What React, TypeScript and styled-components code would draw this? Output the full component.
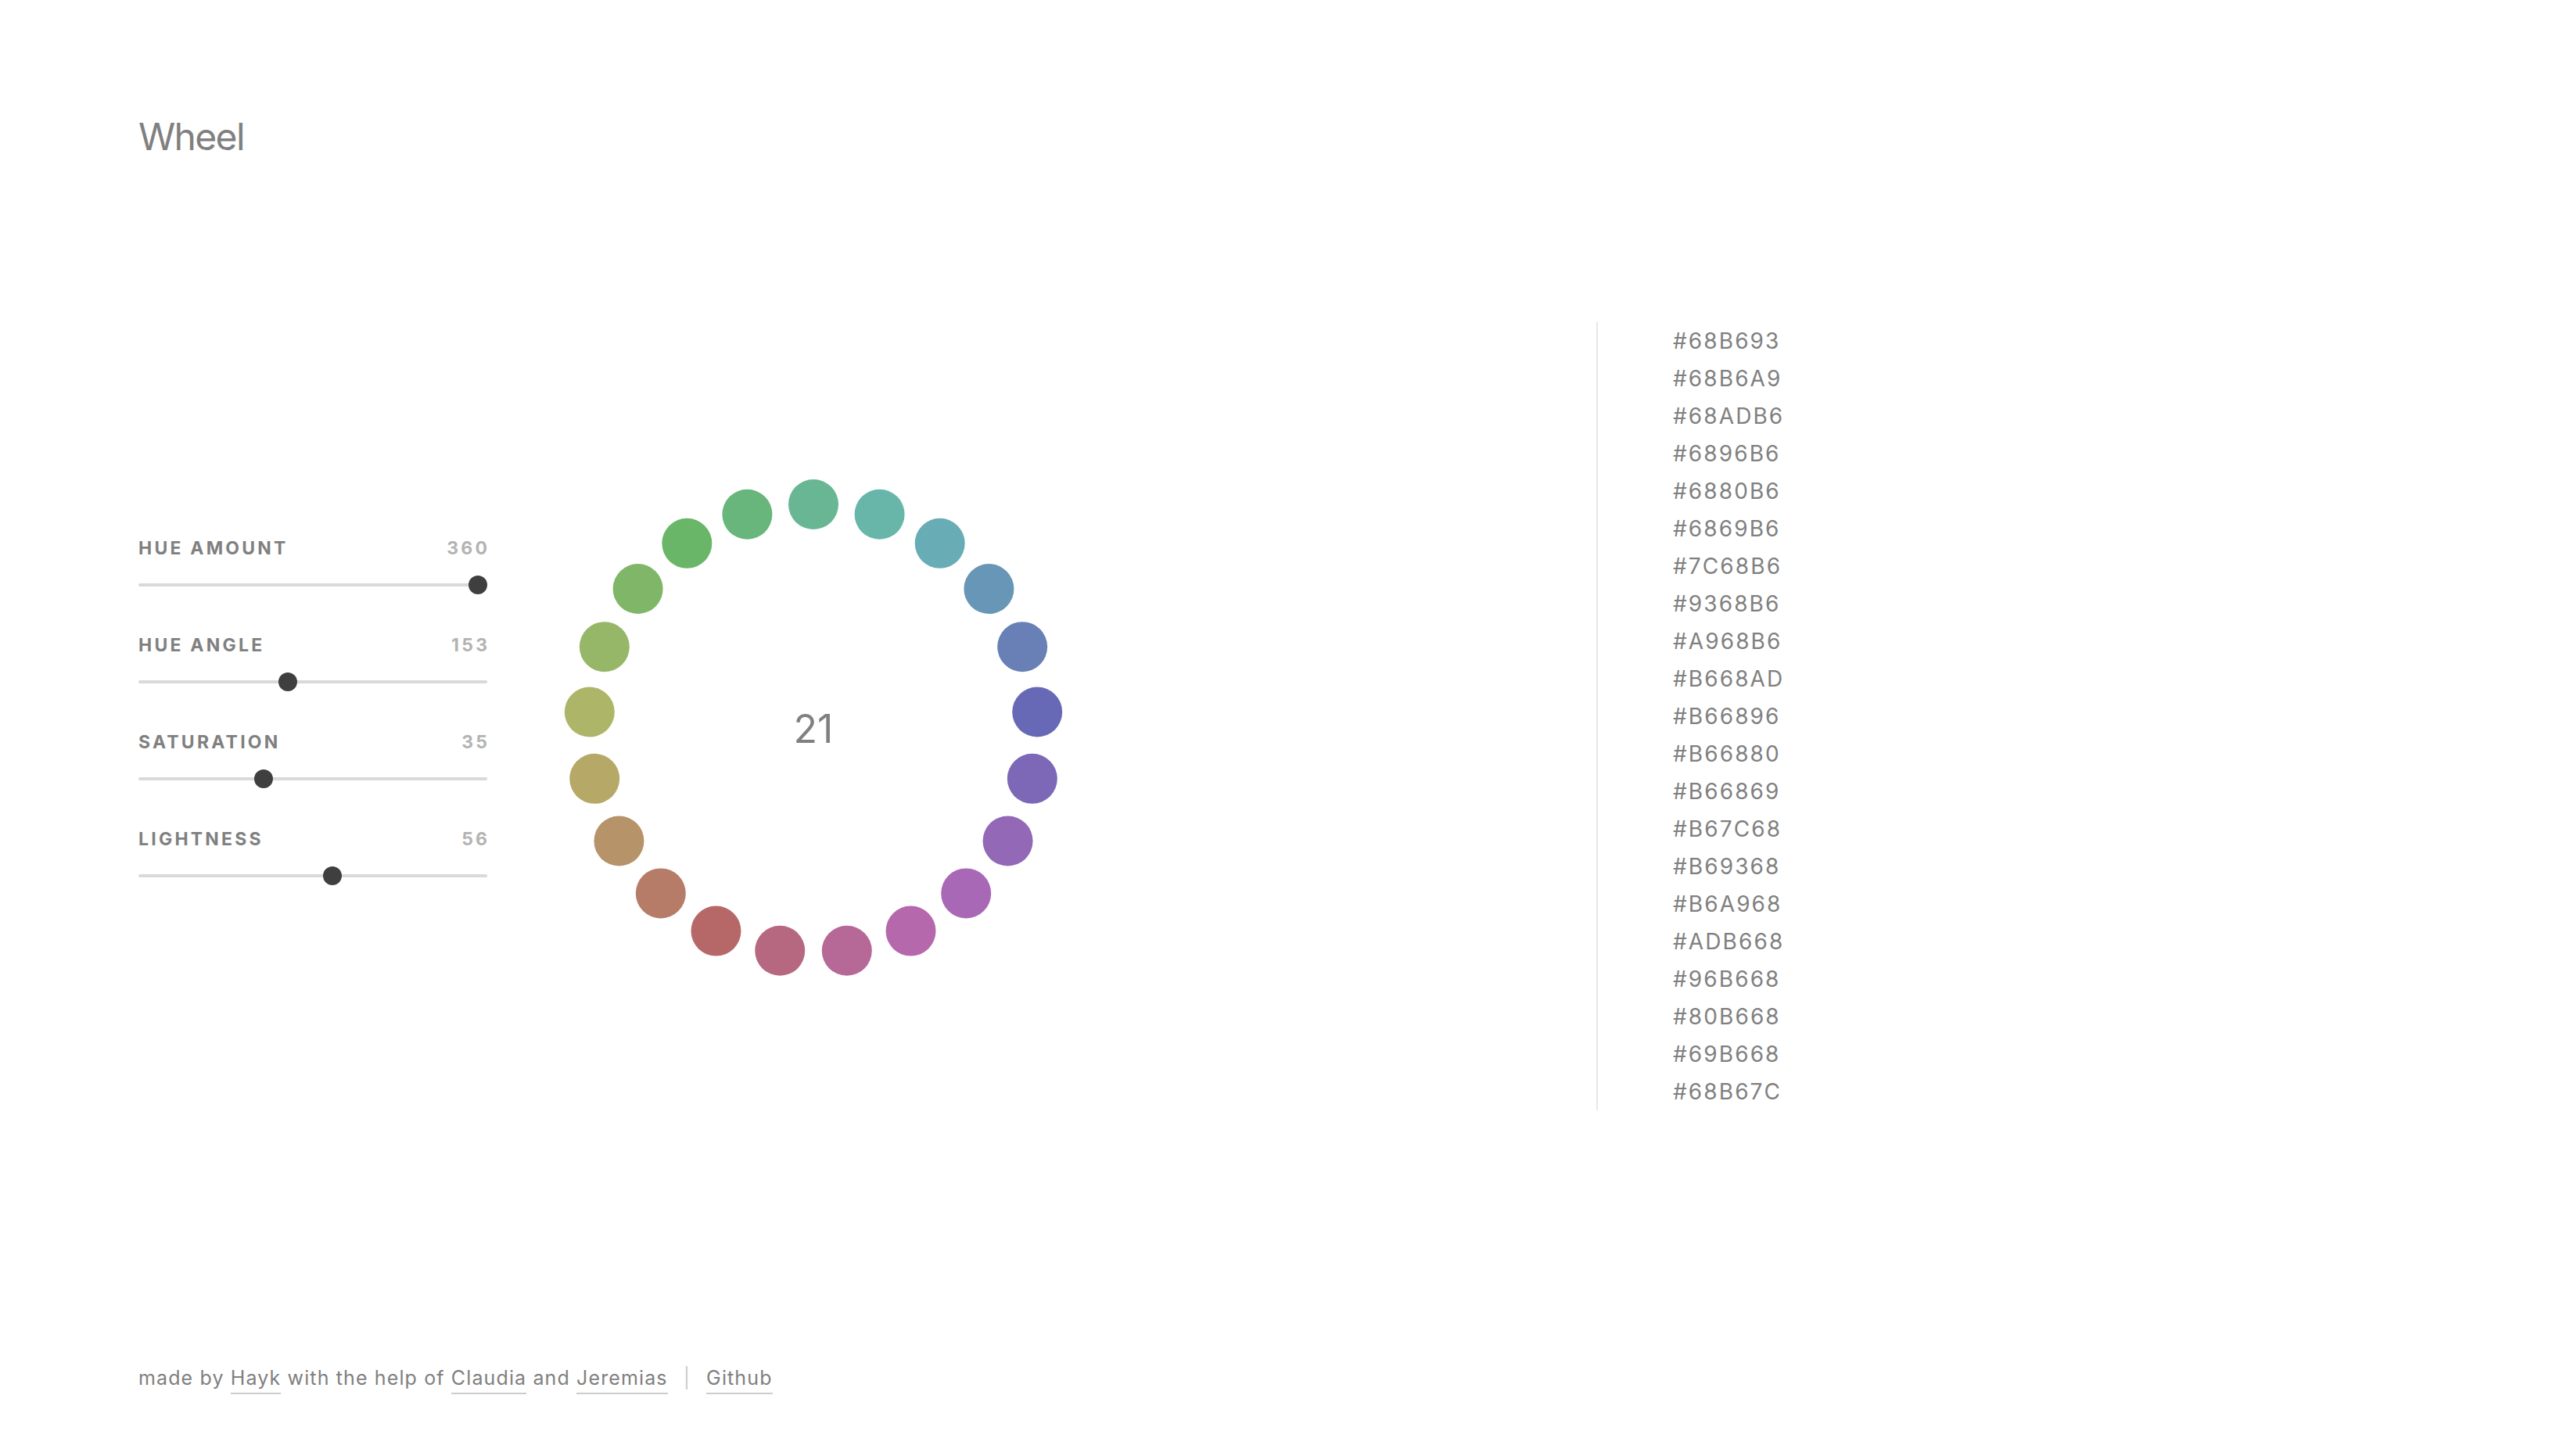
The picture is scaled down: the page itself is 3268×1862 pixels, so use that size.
import React, { useState } from "react";
import styled, { createGlobalStyle } from "styled-components";

const GlobalStyle = createGlobalStyle`
  html, body {
    margin: 0;
    padding: 0;
    background: #ffffff;
  }
  body {
    font-family: Inter, "Noto Sans", sans-serif;
    color: #808080;
    -webkit-font-smoothing: antialiased;
  }
`;

const Page = styled.div`
  display: flex;
  flex-direction: column;
  min-height: 100vh;
  box-sizing: border-box;
  padding: 146px 176px 0 177px;
`;

const Title = styled.h1`
  margin: 0;
  font-size: 48px;
  line-height: 58px;
  font-weight: 400;
  letter-spacing: -0.035em;
  color: #808080;
`;

const Main = styled.main`
  display: flex;
  align-items: flex-start;
  margin-top: 208px;
`;

const Controls = styled.section`
  flex: none;
  width: 446px;
  margin-top: 275px;
  display: flex;
  flex-direction: column;
  gap: 51px;
`;

const Control = styled.div`
  display: flex;
  flex-direction: column;
  gap: 21px;
`;

const LabelRow = styled.div`
  display: flex;
  justify-content: space-between;
  font-size: 23px;
  line-height: 28px;
  font-weight: 700;
  letter-spacing: 0.14em;
  text-transform: uppercase;
`;

const Label = styled.label`
  color: #808080;
`;

const Value = styled.span`
  color: #b3b3b3;
  margin-right: -0.14em;
`;

const Range = styled.input.attrs({ type: "range" })`
  -webkit-appearance: none;
  appearance: none;
  display: block;
  width: 100%;
  height: 24px;
  margin: 0;
  background: transparent;
  cursor: pointer;

  &::-webkit-slider-runnable-track {
    height: 4px;
    border-radius: 2px;
    background: #d9d9d9;
  }
  &::-webkit-slider-thumb {
    -webkit-appearance: none;
    width: 24px;
    height: 24px;
    margin-top: -10px;
    border: none;
    border-radius: 50%;
    background: #3f3f3f;
  }
  &:focus {
    outline: none;
  }
`;

const WheelBox = styled.div`
  flex: none;
  width: 640px;
  height: 640px;
  margin-left: 97px;
  margin-top: 200px;

  svg {
    display: block;
  }
`;

const Count = styled.text`
  font-family: Inter, "Noto Sans", sans-serif;
  font-size: 50px;
  fill: #808080;
`;

const Swatches = styled.ul`
  flex: none;
  list-style: none;
  margin: 0 0 0 681px;
  padding: 0 0 0 96px;
  border-left: 2px solid #e8e8e8;
  font-size: 28px;
  line-height: 48px;
  letter-spacing: 0.075em;
  color: #808080;
`;

const Footer = styled.footer`
  margin-top: auto;
  padding-bottom: 82px;
  font-size: 25px;
  line-height: 35px;
  letter-spacing: 0.045em;
  color: #808080;
`;

const Credit = styled.a`
  color: inherit;
  text-decoration: none;
  padding-bottom: 4px;
  border-bottom: 2px solid #cccccc;
`;

const Sep = styled.span`
  color: #cccccc;
  margin: 0 20px;
`;

function hslToHex(h: number, s: number, l: number) {
  const hh = ((h % 360) + 360) % 360;
  const c = (1 - Math.abs(2 * l - 1)) * s;
  const x = c * (1 - Math.abs(((hh / 60) % 2) - 1));
  const m = l - c / 2;
  let rgb = [0, 0, 0];
  if (hh < 60) rgb = [c, x, 0];
  else if (hh < 120) rgb = [x, c, 0];
  else if (hh < 180) rgb = [0, c, x];
  else if (hh < 240) rgb = [0, x, c];
  else if (hh < 300) rgb = [x, 0, c];
  else rgb = [c, 0, x];
  return (
    "#" +
    rgb
      .map((v) => Math.round((v + m) * 255).toString(16).padStart(2, "0"))
      .join("")
      .toUpperCase()
  );
}

const COUNT = 21;
const SIZE = 640;
const RADIUS = 287;
const DOT = 32;

const App = () => {
  const [amount, setAmount] = useState(360);
  const [angle, setAngle] = useState(153);
  const [saturation, setSaturation] = useState(35);
  const [lightness, setLightness] = useState(56);

  const colors = Array.from({ length: COUNT }, (_, i) =>
    hslToHex(angle + (i * amount) / COUNT, saturation / 100, lightness / 100)
  );

  const sliders = [
    { id: "amount", label: "Hue amount", value: amount, max: 360, set: setAmount },
    { id: "angle", label: "Hue angle", value: angle, max: 360, set: setAngle },
    { id: "saturation", label: "Saturation", value: saturation, max: 100, set: setSaturation },
    { id: "lightness", label: "Lightness", value: lightness, max: 100, set: setLightness },
  ];

  return (
    <Page>
      <GlobalStyle />
      <Title>Wheel</Title>
      <Main>
        <Controls>
          {sliders.map((s) => (
            <Control key={s.id}>
              <LabelRow>
                <Label htmlFor={s.id}>{s.label}</Label>
                <Value>{s.value}</Value>
              </LabelRow>
              <Range
                id={s.id}
                min={0}
                max={s.max}
                value={s.value}
                onChange={(e: React.ChangeEvent<HTMLInputElement>) => s.set(Number(e.target.value))}
              />
            </Control>
          ))}
        </Controls>
        <WheelBox>
          <svg width={SIZE} height={SIZE} viewBox={`0 0 ${SIZE} ${SIZE}`}>
            {colors.map((c, i) => {
              const a = ((-90 + (i * 360) / COUNT) * Math.PI) / 180;
              return (
                <circle
                  key={i}
                  cx={SIZE / 2 + RADIUS * Math.cos(a)}
                  cy={SIZE / 2 + RADIUS * Math.sin(a)}
                  r={DOT}
                  fill={c}
                />
              );
            })}
            <Count x={SIZE / 2} y={SIZE / 2} textAnchor="middle" dominantBaseline="central">
              {COUNT}
            </Count>
          </svg>
        </WheelBox>
        <Swatches>
          {colors.map((c, i) => (
            <li key={i}>{c}</li>
          ))}
        </Swatches>
      </Main>
      <Footer>
        made by <Credit href="#">Hayk</Credit> with the help of <Credit href="#">Claudia</Credit> and{" "}
        <Credit href="#">Jeremias</Credit>
        <Sep>|</Sep>
        <Credit href="#">Github</Credit>
      </Footer>
    </Page>
  );
};

export default App;
